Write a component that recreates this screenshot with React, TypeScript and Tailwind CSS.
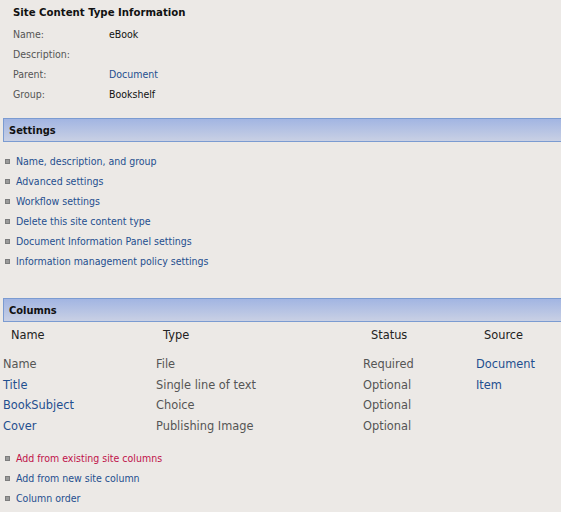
import React from "react";

const tahoma = { fontFamily: '"DejaVu Sans Condensed", "DejaVu Sans", sans-serif' };
const verdana = { fontFamily: '"DejaVu Sans", Verdana, sans-serif' };

function Bullet() {
  return <span className="inline-block w-[5px] h-[5px] bg-[#9a9a9a] border border-[#7d7d7d] mr-[6px] ml-[5px]" />;
}

function LinkItem({ text, color = "text-[#1f4f8f]" }: { text: string; color?: string }) {
  return (
    <div className="h-[20px] flex items-center">
      <Bullet />
      <span className={color}>{text}</span>
    </div>
  );
}

function SectionBar({ title }: { title: string }) {
  return (
    <div className="ml-[3px] h-[24px] flex items-center border-y border-l border-[#7b9bd1] bg-gradient-to-b from-[#a2b5e2] to-[#c9d0e4] pl-[5px] font-bold text-[11px] text-[#111]">
      {title}
    </div>
  );
}

export default function App() {
  const rows = [
    { name: "Name", nameLink: false, type: "File", status: "Required", source: "Document" },
    { name: "Title", nameLink: true, type: "Single line of text", status: "Optional", source: "Item" },
    { name: "BookSubject", nameLink: true, type: "Choice", status: "Optional", source: "" },
    { name: "Cover", nameLink: true, type: "Publishing Image", status: "Optional", source: "" },
  ];
  return (
    <div className="w-[561px] h-[512px] bg-[#ece9e6] overflow-hidden text-[10.5px] leading-none text-[#222]" style={tahoma}>
      <div className="pt-[7px] pl-[13px] font-bold text-[11.3px] text-[#111]">Site Content Type Information</div>
      <div className="pl-[13px] mt-[6px]">
        <div className="h-[20px] flex items-center"><span className="w-[96px] text-[#555]">Name:</span><span className="text-[#111]">eBook</span></div>
        <div className="h-[20px] flex items-center"><span className="w-[96px] text-[#555]">Description:</span></div>
        <div className="h-[20px] flex items-center"><span className="w-[96px] text-[#555]">Parent:</span><span className="text-[#1f4f8f]">Document</span></div>
        <div className="h-[20px] flex items-center"><span className="w-[96px] text-[#555]">Group:</span><span className="text-[#111]">Bookshelf</span></div>
      </div>
      <div className="mt-[14px]">
        <SectionBar title="Settings" />
      </div>
      <div className="mt-[9px]">
        <LinkItem text="Name, description, and group" />
        <LinkItem text="Advanced settings" />
        <LinkItem text="Workflow settings" />
        <LinkItem text="Delete this site content type" />
        <LinkItem text="Document Information Panel settings" />
        <LinkItem text="Information management policy settings" />
      </div>
      <div className="mt-[27px]">
        <SectionBar title="Columns" />
      </div>
      <div style={verdana} className="text-[11.4px]">
        <div className="grid grid-cols-[153px_207px_113px_1fr] h-[26px] items-center text-[#222]">
          <span className="pl-[11px]">Name</span>
          <span className="pl-[10px]">Type</span>
          <span className="pl-[11px]">Status</span>
          <span className="pl-[11px]">Source</span>
        </div>
        <div className="mt-[6px]">
          {rows.map((r) => (
            <div key={r.name} className="grid grid-cols-[153px_207px_113px_1fr] h-[20.7px] items-center text-[#555]">
              <span className={"pl-[3px] " + (r.nameLink ? "text-[#1f4f8f]" : "")}>{r.name}</span>
              <span className="pl-[3px]">{r.type}</span>
              <span className="pl-[3px]">{r.status}</span>
              <span className="pl-[3px] text-[#1f4f8f]">{r.source}</span>
            </div>
          ))}
        </div>
      </div>
      <div className="mt-[11px]">
        <LinkItem text="Add from existing site columns" color="text-[#c0124a]" />
        <LinkItem text="Add from new site column" />
        <LinkItem text="Column order" />
      </div>
    </div>
  );
}
